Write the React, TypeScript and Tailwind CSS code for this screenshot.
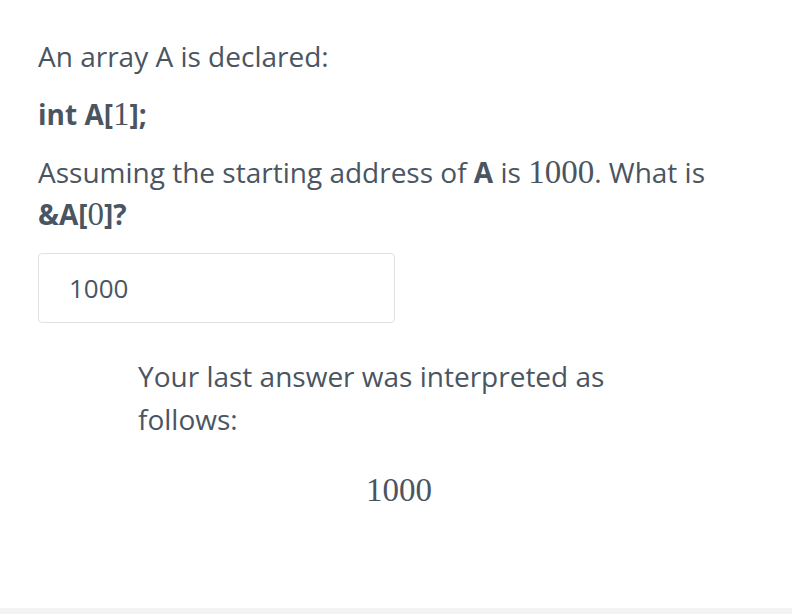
export default function App() {
  const sans = { fontFamily: '"Open Sans", "Noto Sans", sans-serif' };
  const serif = { fontFamily: '"Liberation Serif", "DejaVu Serif", serif' };
  return (
    <div className="w-[792px] h-[614px] flex flex-col bg-white text-[#4a5561]" style={sans}>
      <div className="flex-1 pl-[38px] pr-[60px] pt-[35px] text-[28px] leading-[42px]">
        <p>An array A is declared:</p>
        <p className="mt-[16px] font-bold">
          int A[<span className="font-normal text-[33px] leading-none" style={serif}>1</span>];
        </p>
        <p className="mt-[16px]">
          Assuming the starting address of <b>A</b> is{' '}
          <span className="text-[33px] leading-none" style={serif}>1000</span>. What is{' '}
          <b>
            &amp;A[<span className="font-normal text-[33px] leading-none" style={serif}>0</span>]?
          </b>
        </p>
        <div className="mt-[18px] w-[357px] h-[70px] border border-[#dee2e6] rounded-[4px] flex items-center pl-[30px] text-[26px]">
          1000
        </div>
        <div className="ml-[100px] mt-[32px] w-[522px]">
          <p className="leading-[43px]">Your last answer was interpreted as follows:</p>
          <p className="mt-[28px] text-center text-[33px]" style={serif}>1000</p>
        </div>
      </div>
      <div className="h-[6px] bg-[#f2f3f5]" />
    </div>
  );
}
